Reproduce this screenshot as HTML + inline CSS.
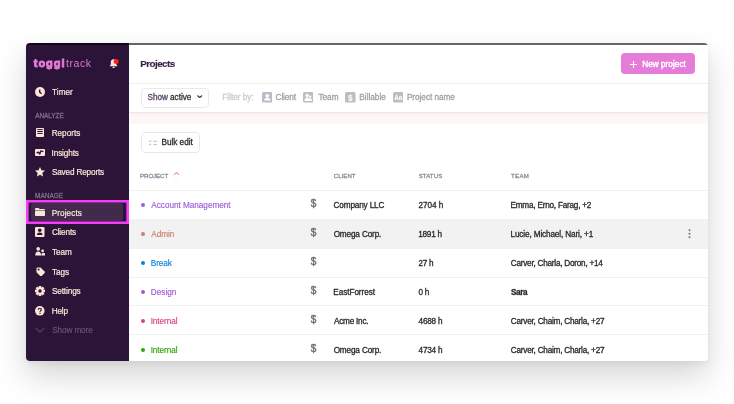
<!DOCTYPE html>
<html><head><meta charset="utf-8"><style>
html,body{margin:0;padding:0;width:734px;height:404px;background:#fff;overflow:hidden;font-family:"Liberation Sans",sans-serif}
.win{position:absolute;left:26px;top:43px;width:681.5px;height:317.5px;border-radius:4px;overflow:hidden;background:#fff;box-shadow:0 15px 32px rgba(0,0,0,0.17),0 3px 6px rgba(0,0,0,0.05)}
.inner{position:absolute;left:-26px;top:-43px;width:734px;height:404px;will-change:transform}
.t{position:absolute;white-space:nowrap;line-height:1}
</style></head><body>
<div class="win"><div class="inner">
<div style="position:absolute;left:26px;top:43px;width:103px;height:320px;background:#2c1338"></div>
<div class="t" style="left:33.79px;top:57.75px;font-size:11px;color:#e57cd8;font-weight:700;letter-spacing:0.960px;-webkit-text-stroke-width:0.9px;">toggl</div>
<div class="t" style="left:65.94px;top:58.00px;font-size:10.5px;color:#df79d2;font-weight:400;letter-spacing:0.606px;">track</div>
<svg style="position:absolute;left:108.8px;top:57.7px" width="11" height="11" viewBox="0 0 11 11">
<path d="M4.6 1.2c-1.8 0-2.8 1.3-2.8 3v2.2L0.6 8.3h8L7.4 6.4V4.2c0-1.7-1-3-2.8-3z" fill="#fce5d8"/>
<rect x="3.5" y="8.7" width="2.2" height="1.3" rx="0.6" fill="#fce5d8"/>
<circle cx="7.2" cy="3.6" r="2.5" fill="#ff1f1f"/></svg>
<div style="position:absolute;left:26px;top:200.4px;width:103px;height:24.1px;box-shadow:inset 0 0 0 2.6px #f83cf8"></div>
<div style="position:absolute;left:31px;top:203px;width:92px;height:18.3px;background:#412a4c;border-radius:3px"></div>
<div class="t" style="left:52.09px;top:88.65px;font-size:8.2px;color:#fce5d8;font-weight:400;letter-spacing:0.026px;-webkit-text-stroke-width:0.2px;">Timer</div>
<div class="t" style="left:51.64px;top:129.65px;font-size:8.2px;color:#fce5d8;font-weight:400;letter-spacing:0.007px;-webkit-text-stroke-width:0.2px;">Reports</div>
<div class="t" style="left:51.56px;top:149.65px;font-size:8.2px;color:#fce5d8;font-weight:400;letter-spacing:-0.120px;-webkit-text-stroke-width:0.2px;">Insights</div>
<div class="t" style="left:51.93px;top:168.65px;font-size:8.2px;color:#fce5d8;font-weight:400;letter-spacing:-0.157px;-webkit-text-stroke-width:0.2px;">Saved Reports</div>
<div class="t" style="left:51.64px;top:209.65px;font-size:8.2px;color:#fce5d8;font-weight:400;letter-spacing:0.092px;-webkit-text-stroke-width:0.2px;">Projects</div>
<div class="t" style="left:51.89px;top:228.65px;font-size:8.2px;color:#fce5d8;font-weight:400;letter-spacing:-0.120px;-webkit-text-stroke-width:0.2px;">Clients</div>
<div class="t" style="left:52.09px;top:248.65px;font-size:8.2px;color:#fce5d8;font-weight:400;letter-spacing:-0.120px;-webkit-text-stroke-width:0.2px;">Team</div>
<div class="t" style="left:52.09px;top:268.65px;font-size:8.2px;color:#fce5d8;font-weight:400;letter-spacing:-0.120px;-webkit-text-stroke-width:0.2px;">Tags</div>
<div class="t" style="left:51.93px;top:287.65px;font-size:8.2px;color:#fce5d8;font-weight:400;letter-spacing:-0.120px;-webkit-text-stroke-width:0.2px;">Settings</div>
<div class="t" style="left:51.64px;top:307.65px;font-size:8.2px;color:#fce5d8;font-weight:400;letter-spacing:-0.120px;-webkit-text-stroke-width:0.2px;">Help</div>
<div class="t" style="left:52.13px;top:326.65px;font-size:8.2px;color:#6a5674;font-weight:400;letter-spacing:-0.100px;-webkit-text-stroke-width:0.15px;">Show more</div>
<div class="t" style="left:35.17px;top:112.55px;font-size:6.4px;color:#806d89;font-weight:400;letter-spacing:-0.014px;-webkit-text-stroke-width:0.3px;">ANALYZE</div>
<div class="t" style="left:35.09px;top:192.55px;font-size:6.4px;color:#806d89;font-weight:400;letter-spacing:0.071px;-webkit-text-stroke-width:0.3px;">MANAGE</div>
<svg style="position:absolute;left:35px;top:87px" width="10" height="10" viewBox="0 0 10 10"><circle cx="5" cy="5" r="5" fill="#fce5d8"/><path d="M4.7 2.6v2.6l1.9 1.5" stroke="#2c1338" stroke-width="1.4" fill="none"/></svg>
<svg style="position:absolute;left:36px;top:128px" width="8" height="9" viewBox="0 0 8 9"><rect width="8" height="9" rx="1" fill="#fce5d8"/><path d="M1.3 1.6h5.4M1.3 3.5h5.4M1.3 5.4h5.4" stroke="#2c1338" stroke-width="1"/></svg>
<svg style="position:absolute;left:35px;top:149px" width="10" height="7" viewBox="0 0 10 7"><rect width="10" height="7" rx="1" fill="#fce5d8"/><path d="M1.6 4.2L3.6 3.2L4.8 5.1L5.9 1.8L8.4 2.6" stroke="#2c1338" stroke-width="1.3" fill="none" stroke-linejoin="round"/></svg>
<svg style="position:absolute;left:35px;top:167.3px" width="10" height="9.5" viewBox="0 0 24 23"><path d="M12 0l3.5 7.6 8.5 1-6.3 5.8 1.7 8.4L12 18.6 4.6 22.8l1.7-8.4L0 8.6l8.5-1z" fill="#fce5d8"/></svg>
<svg style="position:absolute;left:35px;top:208px" width="10" height="8" viewBox="0 0 10 8"><path d="M0 1a1 1 0 0 1 1-1h2.6l1 1H9a1 1 0 0 1 1 1H0z" fill="#fce5d8"/><rect y="2.6" width="10" height="5.4" rx="0.8" fill="#fce5d8"/></svg>
<svg style="position:absolute;left:35.2px;top:227px" width="9.5" height="10" viewBox="0 0 9.5 10"><rect width="9.5" height="10" rx="1.3" fill="#fce5d8"/><circle cx="4.75" cy="3.3" r="1.8" fill="#2c1338"/><path d="M1.9 8.1c0-1.8 1.2-2.6 2.85-2.6s2.85.8 2.85 2.6z" fill="#2c1338"/></svg>
<svg style="position:absolute;left:34.8px;top:247.3px" width="10.5" height="9" viewBox="0 0 10.5 9"><circle cx="3.2" cy="1.9" r="1.8" fill="#fce5d8"/><path d="M0.2 8.6C0.2 5.8 1.6 4.5 3.2 4.5S6.2 5.8 6.2 8.6z" fill="#fce5d8"/><circle cx="7.6" cy="3.8" r="1.4" fill="#fce5d8"/><path d="M6.4 8.6C6.4 6.6 7 5.8 8.3 5.8S10.3 6.6 10.3 8.6z" fill="#fce5d8"/></svg>
<svg style="position:absolute;left:35.5px;top:266.5px" width="9" height="9.5" viewBox="0 0 9 9.5"><path d="M0.5 1.5 A1 1 0 0 1 1.5 0.5 H4.5 L8.6 4.6 A1 1 0 0 1 8.6 6 L5.6 9 A1 1 0 0 1 4.2 9 L0.5 5.3z" fill="#fce5d8"/><circle cx="2.6" cy="2.6" r="1" fill="#2c1338"/></svg>
<svg style="position:absolute;left:35px;top:286.3px" width="10" height="10" viewBox="0 0 10 10"><polygon points="3.67,1.76 3.99,0.00 6.01,0.00 6.33,1.76 6.35,1.77 7.82,0.75 9.25,2.18 8.23,3.65 8.24,3.67 10.00,3.99 10.00,6.01 8.24,6.33 8.23,6.35 9.25,7.82 7.82,9.25 6.35,8.23 6.33,8.24 6.01,10.00 3.99,10.00 3.67,8.24 3.65,8.23 2.18,9.25 0.75,7.82 1.77,6.35 1.76,6.33 0.00,6.01 0.00,3.99 1.76,3.67 1.77,3.65 0.75,2.18 2.18,0.75 3.65,1.77" fill="#fce5d8" stroke="#fce5d8" stroke-width="0.3" stroke-linejoin="round"/><circle cx="5" cy="5" r="1.7" fill="#2c1338"/></svg>
<svg style="position:absolute;left:35.2px;top:306.2px" width="9.6" height="9.6" viewBox="0 0 10 10"><circle cx="5" cy="5" r="5" fill="#fce5d8"/><path d="M3.4 3.9c0-1 .7-1.6 1.6-1.6s1.6.6 1.6 1.5c0 1.1-1.4 1.2-1.4 2.3" stroke="#2c1338" stroke-width="1.2" fill="none"/><circle cx="5.2" cy="7.6" r="0.7" fill="#2c1338"/></svg>
<svg style="position:absolute;left:35px;top:327px" width="10" height="6.5" viewBox="0 0 10 6.5"><path d="M0.9 1.2l4.1 3.9 4.1-3.9" stroke="#5b4567" stroke-width="1.1" fill="none"/></svg>
<div class="t" style="left:140.36px;top:58.85px;font-size:9.8px;color:#3a2447;font-weight:700;letter-spacing:-0.562px;-webkit-text-stroke-width:0.15px;">Projects</div>
<div style="position:absolute;left:621px;top:53px;width:74px;height:21px;background:#e57cd8;border-radius:4px"></div>
<svg style="position:absolute;left:630.2px;top:60.5px" width="7" height="7" viewBox="0 0 7 7"><path d="M3.5 0v7M0 3.5h7" stroke="#fff" stroke-width="1.1"/></svg>
<div class="t" style="left:642.24px;top:60.65px;font-size:8.2px;color:#ffffff;font-weight:400;letter-spacing:0.034px;-webkit-text-stroke-width:0.4px;">New project</div>
<div style="position:absolute;left:129px;top:83px;width:579px;height:1px;background:#efefef"></div>
<div style="position:absolute;left:141px;top:87.5px;width:65.5px;height:18px;border:1px solid #ebe8ec;border-radius:4px"></div>
<div class="t" style="left:147.53px;top:93.65px;font-size:8.2px;color:#5a4566;font-weight:400;letter-spacing:-0.036px;-webkit-text-stroke-width:0.3px;">Show <span style="color:#333">active</span></div>
<svg style="position:absolute;left:197.4px;top:95.2px" width="5.5" height="4" viewBox="0 0 5.5 4"><path d="M0.9 0.9Q2.75 3.6 4.6 0.9" stroke="#4b3457" stroke-width="1.3" fill="none" stroke-linecap="round"/></svg>
<div class="t" style="left:222.34px;top:93.65px;font-size:8.2px;color:#cfc9d2;font-weight:400;letter-spacing:-0.001px;-webkit-text-stroke-width:0.3px;">Filter by:</div>
<svg style="position:absolute;left:261.8px;top:92px" width="10.5" height="10.5" viewBox="0 0 10 10"><rect width="10" height="10" rx="1.5" fill="#c3b9c6"/><circle cx="5" cy="3.6" r="1.8" fill="#fff"/><path d="M2 8c0-1.8 1.3-2.6 3-2.6s3 .8 3 2.6z" fill="#fff"/></svg>
<div class="t" style="left:275.59px;top:93.65px;font-size:8.2px;color:#a39ea6;font-weight:400;letter-spacing:-0.100px;-webkit-text-stroke-width:0.3px;">Client</div>
<svg style="position:absolute;left:302.8px;top:92px" width="10.5" height="10.5" viewBox="0 0 10 10"><rect width="10" height="10" rx="1.5" fill="#c3b9c6"/><circle cx="3.9" cy="3.3" r="1.6" fill="#fff"/><path d="M1.4 8.6c0-2.2 1-3.4 2.5-3.4s2.5 1.2 2.5 3.4z" fill="#fff"/><circle cx="6.9" cy="4.6" r="1.2" fill="#fff"/><path d="M5.6 8.6c0-1.6.5-2.6 1.3-2.6s1.7 1 1.7 2.6z" fill="#fff"/></svg>
<div class="t" style="left:318.40px;top:93.65px;font-size:8.2px;color:#a39ea6;font-weight:400;letter-spacing:0.043px;-webkit-text-stroke-width:0.3px;">Team</div>
<svg style="position:absolute;left:345px;top:92px" width="10.5" height="10.5" viewBox="0 0 10 10"><rect width="10" height="10" rx="1.5" fill="#c3b9c6"/><text x="5" y="8.2" font-size="8" text-anchor="middle" fill="#fff" font-family="Liberation Sans" font-weight="700">$</text></svg>
<div class="t" style="left:359.34px;top:93.65px;font-size:8.2px;color:#a39ea6;font-weight:400;letter-spacing:0.011px;-webkit-text-stroke-width:0.3px;">Billable</div>
<svg style="position:absolute;left:392.6px;top:92px" width="10.5" height="10.5" viewBox="0 0 10 10"><rect width="10" height="10" rx="1.5" fill="#c3b9c6"/><text x="5" y="7.6" font-size="6" text-anchor="middle" fill="#fff" font-family="Liberation Sans" font-weight="700">Aa</text></svg>
<div class="t" style="left:406.94px;top:93.65px;font-size:8.2px;color:#a39ea6;font-weight:400;letter-spacing:-0.034px;-webkit-text-stroke-width:0.3px;">Project name</div>
<div style="position:absolute;left:129px;top:112px;width:579px;height:1px;background:#ece6e6"></div>
<div style="position:absolute;left:129px;top:113px;width:579px;height:10.5px;background:linear-gradient(#f6f0ef,#fcf7f4 3px,#fdf8f5)"></div>
<div style="position:absolute;left:141px;top:132.4px;width:57.4px;height:18.3px;border:1px solid #ebe8ec;border-radius:4px"></div>
<svg style="position:absolute;left:149px;top:139.5px" width="9" height="6" viewBox="0 0 9 6"><rect x="0" y="0.4" width="2.3" height="1.5" rx="0.4" fill="#c8c8c8"/><rect x="0" y="3.7" width="2.3" height="1.5" rx="0.4" fill="#c8c8c8"/><rect x="4" y="0.6" width="4.3" height="1.1" fill="#c8c8c8"/><rect x="4" y="3.9" width="4.3" height="1.1" fill="#c8c8c8"/></svg>
<div class="t" style="left:161.44px;top:138.65px;font-size:8.2px;color:#2b2b2b;font-weight:400;letter-spacing:-0.006px;-webkit-text-stroke-width:0.3px;">Bulk edit</div>
<div class="t" style="left:140.11px;top:172.70px;font-size:6.1px;color:#8a8f9b;font-weight:400;letter-spacing:-0.074px;-webkit-text-stroke-width:0.3px;">PROJECT</div>
<svg style="position:absolute;left:173px;top:171px" width="7" height="10" viewBox="0 0 7 10"><path d="M1.2 3.6l2.3-2 2.3 2" stroke="#e98ee0" stroke-width="1.1" fill="none" stroke-linecap="round"/><path d="M1.4 6.6l2.1 1.9 2.1-1.9" stroke="#ececec" stroke-width="0.9" fill="none"/></svg>
<div class="t" style="left:333.80px;top:172.70px;font-size:6.1px;color:#8a8f9b;font-weight:400;letter-spacing:0.008px;-webkit-text-stroke-width:0.3px;">CLIENT</div>
<div class="t" style="left:418.63px;top:172.70px;font-size:6.1px;color:#8a8f9b;font-weight:400;letter-spacing:0.100px;-webkit-text-stroke-width:0.3px;">STATUS</div>
<div class="t" style="left:511.05px;top:172.70px;font-size:6.1px;color:#8a8f9b;font-weight:400;letter-spacing:0.271px;-webkit-text-stroke-width:0.3px;">TEAM</div>
<div style="position:absolute;left:129px;top:190px;width:579px;height:1px;background:#f1f1f1"></div>
<div style="position:absolute;left:141.1px;top:202.5px;width:4.4px;height:4.4px;border-radius:50%;background:#9e5bd9"></div>
<div class="t" style="left:151.36px;top:201.65px;font-size:8.2px;color:#9e5bd9;font-weight:400;letter-spacing:-0.027px;-webkit-text-stroke-width:0.15px;">Account Management</div>
<div class="t" style="left:310.80px;top:198.75px;font-size:10px;color:#6f6f6f;font-weight:400;-webkit-text-stroke-width:0.45px;">$</div>
<div class="t" style="left:333.59px;top:201.65px;font-size:8.2px;color:#2a2a2a;font-weight:400;letter-spacing:-0.156px;-webkit-text-stroke-width:0.3px;">Company LLC</div>
<div class="t" style="left:418.39px;top:201.65px;font-size:8.2px;color:#2a2a2a;font-weight:400;letter-spacing:-0.030px;-webkit-text-stroke-width:0.3px;">2704 h</div>
<div class="t" style="left:510.54px;top:201.65px;font-size:8.2px;color:#2a2a2a;font-weight:400;letter-spacing:-0.224px;-webkit-text-stroke-width:0.3px;">Emma, Erno, Farag, +2</div>
<div style="position:absolute;left:129px;top:218.85px;width:579px;height:1px;background:#f1f1f1"></div>
<div style="position:absolute;left:129px;top:219px;width:579px;height:28.7px;background:#f2f2f2"></div>
<div style="position:absolute;left:141.1px;top:231.5px;width:4.4px;height:4.4px;border-radius:50%;background:#c9806b"></div>
<div class="t" style="left:151.36px;top:230.65px;font-size:8.2px;color:#c9806b;font-weight:400;letter-spacing:-0.060px;-webkit-text-stroke-width:0.15px;">Admin</div>
<div class="t" style="left:310.80px;top:227.75px;font-size:10px;color:#6f6f6f;font-weight:400;-webkit-text-stroke-width:0.45px;">$</div>
<div class="t" style="left:333.63px;top:230.65px;font-size:8.2px;color:#2a2a2a;font-weight:400;letter-spacing:-0.139px;-webkit-text-stroke-width:0.3px;">Omega Corp.</div>
<div class="t" style="left:418.19px;top:230.65px;font-size:8.2px;color:#2a2a2a;font-weight:400;letter-spacing:-0.220px;-webkit-text-stroke-width:0.3px;">1891 h</div>
<div class="t" style="left:510.54px;top:230.65px;font-size:8.2px;color:#2a2a2a;font-weight:400;letter-spacing:-0.136px;-webkit-text-stroke-width:0.3px;">Lucie, Michael, Nari, +1</div>
<div style="position:absolute;left:129px;top:247.7px;width:579px;height:1px;background:#f1f1f1"></div>
<div style="position:absolute;left:141.1px;top:260.5px;width:4.4px;height:4.4px;border-radius:50%;background:#0b83d9"></div>
<div class="t" style="left:150.74px;top:259.65px;font-size:8.2px;color:#0b83d9;font-weight:400;letter-spacing:-0.060px;-webkit-text-stroke-width:0.15px;">Break</div>
<div class="t" style="left:310.80px;top:256.75px;font-size:10px;color:#6f6f6f;font-weight:400;-webkit-text-stroke-width:0.45px;">$</div>
<div class="t" style="left:418.39px;top:259.65px;font-size:8.2px;color:#2a2a2a;font-weight:400;letter-spacing:-0.220px;-webkit-text-stroke-width:0.3px;">27 h</div>
<div class="t" style="left:510.79px;top:259.65px;font-size:8.2px;color:#2a2a2a;font-weight:400;letter-spacing:-0.238px;-webkit-text-stroke-width:0.3px;">Carver, Charla, Doron, +14</div>
<div style="position:absolute;left:129px;top:276.55px;width:579px;height:1px;background:#f1f1f1"></div>
<div style="position:absolute;left:141.1px;top:289.5px;width:4.4px;height:4.4px;border-radius:50%;background:#9e5bd9"></div>
<div class="t" style="left:150.74px;top:288.65px;font-size:8.2px;color:#9e5bd9;font-weight:400;letter-spacing:0.037px;-webkit-text-stroke-width:0.15px;">Design</div>
<div class="t" style="left:310.80px;top:285.75px;font-size:10px;color:#6f6f6f;font-weight:400;-webkit-text-stroke-width:0.45px;">$</div>
<div class="t" style="left:333.34px;top:288.65px;font-size:8.2px;color:#2a2a2a;font-weight:400;letter-spacing:-0.066px;-webkit-text-stroke-width:0.3px;">EastForrest</div>
<div class="t" style="left:418.47px;top:288.65px;font-size:8.2px;color:#2a2a2a;font-weight:400;letter-spacing:-0.220px;-webkit-text-stroke-width:0.3px;">0 h</div>
<div class="t" style="left:510.95px;top:288.65px;font-size:8.2px;color:#2a2a2a;font-weight:700;letter-spacing:-0.383px;-webkit-text-stroke-width:0.3px;">Sara</div>
<div style="position:absolute;left:129px;top:305.4px;width:579px;height:1px;background:#f1f1f1"></div>
<div style="position:absolute;left:141.1px;top:318.5px;width:4.4px;height:4.4px;border-radius:50%;background:#d94182"></div>
<div class="t" style="left:150.66px;top:317.65px;font-size:8.2px;color:#d94182;font-weight:400;letter-spacing:-0.060px;-webkit-text-stroke-width:0.15px;">Internal</div>
<div class="t" style="left:310.80px;top:314.75px;font-size:10px;color:#6f6f6f;font-weight:400;-webkit-text-stroke-width:0.45px;">$</div>
<div class="t" style="left:333.96px;top:317.65px;font-size:8.2px;color:#2a2a2a;font-weight:400;letter-spacing:-0.220px;-webkit-text-stroke-width:0.3px;">Acme Inc.</div>
<div class="t" style="left:418.60px;top:317.65px;font-size:8.2px;color:#2a2a2a;font-weight:400;letter-spacing:-0.220px;-webkit-text-stroke-width:0.3px;">4688 h</div>
<div class="t" style="left:510.79px;top:317.65px;font-size:8.2px;color:#2a2a2a;font-weight:400;letter-spacing:-0.227px;-webkit-text-stroke-width:0.3px;">Carver, Chaim, Charla, +27</div>
<div style="position:absolute;left:129px;top:334.25px;width:579px;height:1px;background:#f1f1f1"></div>
<div style="position:absolute;left:141.1px;top:347.5px;width:4.4px;height:4.4px;border-radius:50%;background:#2da608"></div>
<div class="t" style="left:150.66px;top:346.65px;font-size:8.2px;color:#2da608;font-weight:400;letter-spacing:-0.060px;-webkit-text-stroke-width:0.15px;">Internal</div>
<div class="t" style="left:310.80px;top:343.75px;font-size:10px;color:#6f6f6f;font-weight:400;-webkit-text-stroke-width:0.45px;">$</div>
<div class="t" style="left:333.63px;top:346.65px;font-size:8.2px;color:#2a2a2a;font-weight:400;letter-spacing:-0.139px;-webkit-text-stroke-width:0.3px;">Omega Corp.</div>
<div class="t" style="left:418.60px;top:346.65px;font-size:8.2px;color:#2a2a2a;font-weight:400;letter-spacing:-0.220px;-webkit-text-stroke-width:0.3px;">4734 h</div>
<div class="t" style="left:510.79px;top:346.65px;font-size:8.2px;color:#2a2a2a;font-weight:400;letter-spacing:-0.227px;-webkit-text-stroke-width:0.3px;">Carver, Chaim, Charla, +27</div>
<div style="position:absolute;left:129px;top:363.1px;width:579px;height:1px;background:#f1f1f1"></div>
<svg style="position:absolute;left:688px;top:229px" width="3" height="10" viewBox="0 0 3 10"><circle cx="1.5" cy="1.2" r="1" fill="#7a6c84"/><circle cx="1.5" cy="4.8" r="1" fill="#7a6c84"/><circle cx="1.5" cy="8.2" r="1" fill="#7a6c84"/></svg>
<div style="position:absolute;left:26px;top:43px;width:682px;height:1.6px;background:rgba(0,0,0,0.6)"></div>
</div></div>
</body></html>
